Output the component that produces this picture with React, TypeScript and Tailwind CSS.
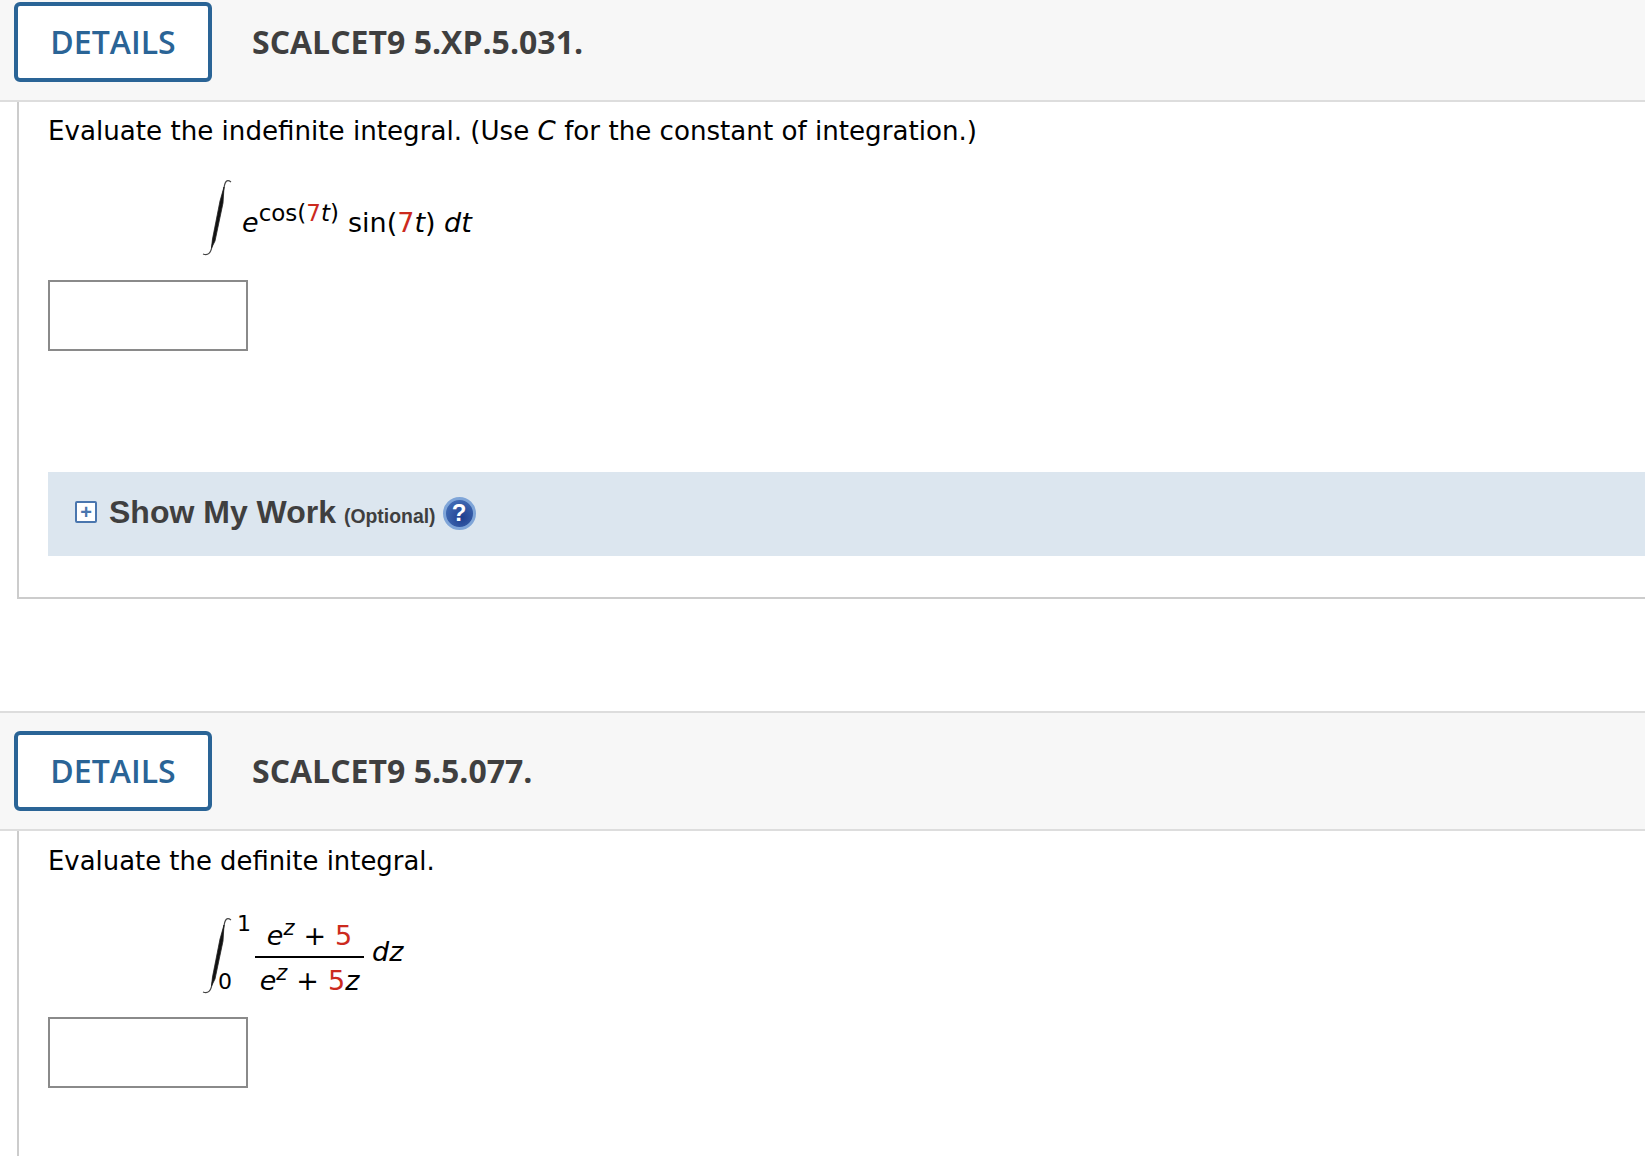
import type { ReactNode } from 'react';

function Red({ children }: { children: ReactNode }) {
  return <span className="text-[#cc2a1e]">{children}</span>;
}

function IntegralSign() {
  return (
    <svg width="30" height="78" viewBox="0 0 30 78" className="block shrink-0 blur-[0.4px]">
      <path d="M29 3 C25 0 23 2 22 9 L10 67 C9 74 6 77 1 75" fill="none" stroke="#444" strokeWidth="1.2" />
      <path d="M22 8 L18 22 L10.5 60 L9.5 69 L13 62 L21 24 Z" fill="#111" stroke="#222" strokeWidth="0.8" />
    </svg>
  );
}

function QuestionHeader({ code, tall }: { code: string; tall?: boolean }) {
  return (
    <div
      className={`${tall ? 'h-[118px] pt-[18px]' : 'h-[102px] pt-[2px]'} bg-[#f7f7f7] border-b-2 border-[#dddddd] pl-[14px] flex items-start`}
    >
      <button className="w-[198px] h-[80px] rounded-[6px] border-[4px] border-[#2a6496] bg-white text-[#2a6496] text-[32px] font-semibold font-['Open_Sans',sans-serif] flex items-center justify-center">
        DETAILS
      </button>
      <div className="ml-[40px] h-[80px] flex items-center text-[32px] font-bold text-[#3f3f3f] font-['Open_Sans',sans-serif]">
        {code}
      </div>
    </div>
  );
}

function AnswerBox() {
  return <div className="w-[200px] h-[71px] border-2 border-[#8a8a8a] bg-white" />;
}

function HelpIcon() {
  return (
    <div className="w-[33px] h-[33px] rounded-full border-[3px] border-[#7fa5d8] bg-[radial-gradient(circle_at_60%_65%,#1f3f8f,#4a78c0)] flex items-center justify-center text-white text-[24px] font-bold font-['Liberation_Sans',sans-serif]">
      ?
    </div>
  );
}

export default function App() {
  return (
    <div className="w-[1645px] h-[1156px] overflow-hidden bg-white font-['DejaVu_Sans',sans-serif] text-[26px] text-black">
      <QuestionHeader code="SCALCET9 5.XP.5.031." />

      <div className="ml-[17px] h-[497px] border-l-2 border-b-2 border-[#cccccc] pl-[29px]">
        <p className="pt-[12px] leading-[34px] text-[26.13px]">
          Evaluate the indefinite integral. (Use <i>C</i> for the constant of integration.)
        </p>

        <div className="mt-[32px] ml-[154px] h-[75px] flex items-center text-[27px]">
          <IntegralSign />
          <span className="ml-[10px] italic mt-[11px]">e</span>
          <span className="text-[23px] -mt-[8px]">
            cos(<Red>7</Red><i>t</i>)
          </span>
          <span className="ml-[9px] mt-[11px]">
            sin(<Red>7</Red><i>t</i>) <i>dt</i>
          </span>
        </div>

        <div className="mt-[25px]">
          <AnswerBox />
        </div>

        <div className="mt-[121px] h-[84px] bg-[#dce6ef] flex items-center pl-[27px]">
          <div className="-mt-[4px] w-[22px] h-[22px] rounded-[2px] border-2 border-[#4a76ae] bg-white flex items-center justify-center text-[#4a76ae] text-[20px] font-bold leading-none font-['Liberation_Sans',sans-serif]">
            +
          </div>
          <div className="ml-[12px] -mt-[4px] font-['Liberation_Sans',sans-serif] font-bold text-[#3f3f3f] text-[32px]">
            Show My Work
          </div>
          <div className="ml-[8px] mt-[6px] font-['Liberation_Sans',sans-serif] font-bold text-[#3f3f3f] text-[19.4px]">
            (Optional)
          </div>
          <div className="ml-[7px] -mt-[2px]">
            <HelpIcon />
          </div>
        </div>
      </div>

      <div className="mt-[112px] border-t-2 border-[#dddddd]">
        <QuestionHeader code="SCALCET9 5.5.077." tall />
      </div>

      <div className="ml-[17px] h-[330px] border-l-2 border-[#cccccc] pl-[29px]">
        <p className="pt-[13px] leading-[34px] text-[25.9px]">Evaluate the definite integral.</p>

        <div className="mt-[40px] ml-[154px] h-[75px] flex items-center text-[27px]">
          <IntegralSign />
          <div className="ml-[5px] -mt-[5px] flex flex-col justify-between h-[82px] text-[22px] leading-[24px]">
            <span>1</span>
            <span className="-ml-[19px]">0</span>
          </div>
          <div className="ml-[4px] mt-[9px] w-[109px] flex flex-col items-stretch">
            <div className="h-[42px] flex items-center justify-center border-b-2 border-black">
              <i>e</i>
              <i className="text-[21px] -mt-[14px]">z</i>
              <span className="ml-[9px]">+</span>
              <span className="ml-[9px]"><Red>5</Red></span>
            </div>
            <div className="h-[46px] flex items-center justify-center">
              <i>e</i>
              <i className="text-[21px] -mt-[14px]">z</i>
              <span className="ml-[9px]">+</span>
              <span className="ml-[9px]"><Red>5</Red><i>z</i></span>
            </div>
          </div>
          <i className="ml-[8px] -mt-[6px]">dz</i>
        </div>

        <div className="mt-[24px]">
          <AnswerBox />
        </div>
      </div>
    </div>
  );
}
